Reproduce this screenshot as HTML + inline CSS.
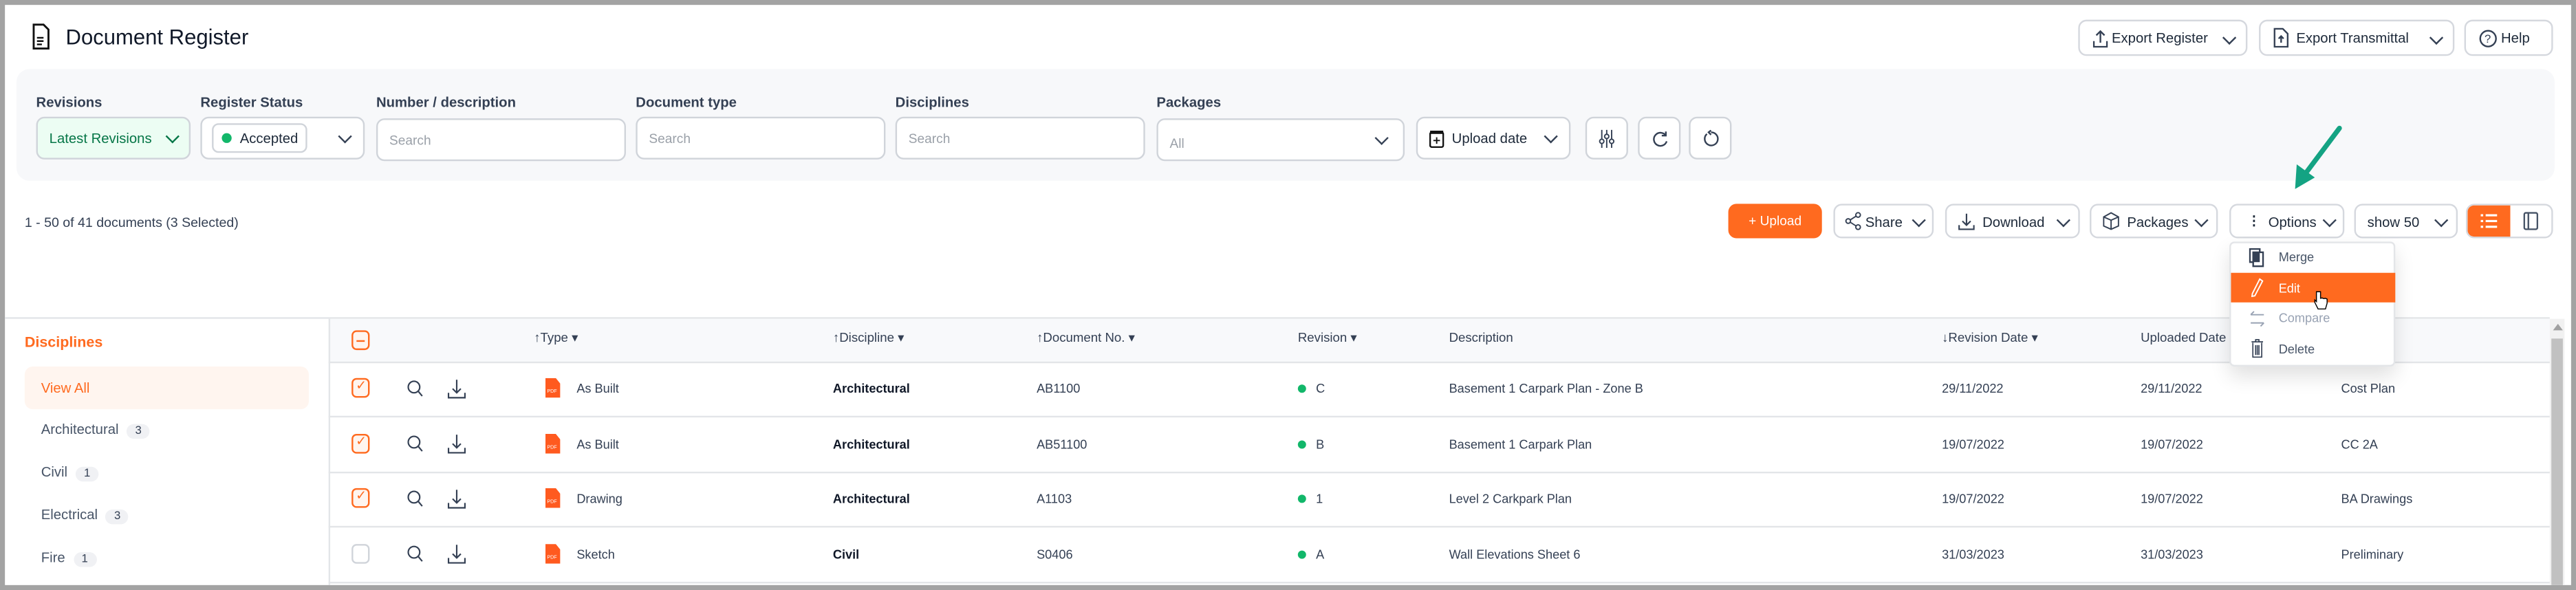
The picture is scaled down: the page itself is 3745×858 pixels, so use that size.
<!DOCTYPE html>
<html><head><meta charset="utf-8"><style>
html,body{margin:0;padding:0;width:3745px;height:858px;overflow:hidden;background:#a3a3a3}
#s{position:absolute;left:0;top:0;width:1568px;height:359px;transform-origin:0 0;transform:scale(2.3884,2.39);font-family:"Liberation Sans",sans-serif;color:#1d2939}
.a{position:absolute}
#in{left:3px;top:3px;width:1562px;height:353px;background:#fff}
.btn{position:absolute;background:#fff;border:1px solid #d5d8de;border-radius:5px;box-sizing:border-box;font-size:8.5px;display:flex;align-items:center;color:#1d2939}
.lbl{position:absolute;font-size:8.5px;color:#344054;font-weight:bold;top:57px}
.inp{position:absolute;top:71px;height:26px;background:#fff;border:1px solid #d0d4da;border-radius:5px;box-sizing:border-box;font-size:8px;color:#9aa0a8;display:flex;align-items:center;padding-left:7px}
.chev{position:absolute;width:5px;height:5px;border-right:0.8px solid #344054;border-bottom:0.8px solid #344054;transform:rotate(45deg)}
.t{position:absolute;font-size:7.6px;color:#344054;white-space:nowrap}
.th{position:absolute;font-size:7.8px;color:#344054;top:201px;white-space:nowrap}
.hl{position:absolute;left:200px;width:1352px;height:1px;background:#e3e5e8}
.cb{position:absolute;left:214px;width:11px;height:12px;border:1px solid #ff6a1f;border-radius:3px;box-sizing:border-box;background:#fff5ef}
.pdf{position:absolute;left:332px;width:9px;height:12px;background:#ff5a1f;clip-path:polygon(0 0,70% 0,100% 28%,100% 100%,0 100%)}
.pdf:after{content:"PDF";position:absolute;left:1px;top:6px;font-size:3px;color:#fff}
.dot{position:absolute;left:790px;width:5px;height:5px;border-radius:50%;background:#12b76a}
.badge{display:inline-block;background:#f0f1f4;border-radius:8px;font-size:7px;padding:1px 5px;margin-left:5px;color:#344054}
.side{position:absolute;left:25px;font-size:8.5px;color:#475467}
</style></head><body><div id="s">
<div class="a" id="in"></div>
<svg class="a" style="left:19px;top:14px" width="12" height="17" viewBox="0 0 12 17"><path d="M1.5 1h6l3 3v11.5h-9z" fill="none" stroke="#111" stroke-width="1.2"/><path d="M3.5 9h4M3.5 11h4M3.5 13h3" stroke="#111" stroke-width="1"/></svg>
<div class="a" style="left:40px;top:15px;font-size:13px;color:#101828">Document Register</div>
<div class="btn" style="left:1265px;top:12px;width:103px;height:22px;padding-left:8px"><svg width="9" height="11" viewBox="0 0 9 11"><path d="M4.5 8V1M2 3.5 4.5 1 7 3.5M.5 7v3.5h8V7" fill="none" stroke="#344054"/></svg>&nbsp;Export Register<span class="chev" style="left:88px;top:7px"></span></div>
<div class="btn" style="left:1375px;top:12px;width:119px;height:22px;padding-left:8px"><svg width="9" height="12" viewBox="0 0 9 12"><path d="M.5.5h5l3 3v8h-8z M4.5 9V5M3 6.5 4.5 5 6 6.5" fill="none" stroke="#344054"/></svg>&nbsp;&nbsp;Export Transmittal<span class="chev" style="left:104px;top:7px"></span></div>
<div class="btn" style="left:1500px;top:12px;width:54px;height:22px;padding-left:8px"><svg width="11" height="11" viewBox="0 0 11 11"><circle cx="5.5" cy="5.5" r="4.8" fill="none" stroke="#344054"/><text x="3.3" y="8" font-size="7" fill="#344054" font-family="Liberation Sans">?</text></svg>&nbsp;Help</div>
<div class="a" style="left:10px;top:42px;width:1545px;height:68px;background:#f7f8fa;border-radius:8px"></div>
<div class="lbl" style="left:22px">Revisions</div>
<div class="lbl" style="left:122px">Register Status</div>
<div class="lbl" style="left:229px">Number / description</div>
<div class="lbl" style="left:387px">Document type</div>
<div class="lbl" style="left:545px">Disciplines</div>
<div class="lbl" style="left:704px">Packages</div>
<div class="inp" style="left:22px;width:94px;background:#ecfdf3;color:#067647;font-size:8.5px">Latest Revisions<span class="chev" style="left:79px;top:8px;border-color:#067647"></span></div>
<div class="inp" style="left:122px;width:100px;padding-left:6px"><div style="border:1px solid #d0d4da;border-radius:4px;height:18px;width:58px;box-sizing:border-box;display:flex;align-items:center;color:#1d2939;font-size:8.5px;padding-left:5px"><span style="width:6px;height:6px;border-radius:50%;background:#12b76a;display:inline-block;margin-right:5px"></span>Accepted</div><span class="chev" style="left:84px;top:8px"></span></div>
<div class="inp" style="left:229px;width:152px;top:72px">Search</div>
<div class="inp" style="left:387px;width:152px">Search</div>
<div class="inp" style="left:545px;width:152px">Search</div>
<div class="inp" style="left:704px;width:151px;top:72px;height:26px;padding-top:4px">All<span class="chev" style="left:133px;top:8px"></span></div>
<div class="inp" style="left:862px;width:94px;color:#1d2939;font-size:8.5px"><svg width="9" height="11" viewBox="0 0 9 11"><rect x=".5" y="1.5" width="8" height="9" rx="1" fill="none" stroke="#111"/><rect x=".5" y=".5" width="8" height="2" fill="#111"/><path d="M4.5 4.5v4M2.5 6.5h4" stroke="#111" stroke-width=".8"/></svg>&nbsp;&nbsp;Upload date<span class="chev" style="left:78px;top:8px"></span></div>
<div class="inp" style="left:965px;width:26px;padding:0;justify-content:center"><svg width="10" height="11" viewBox="0 0 10 11"><path d="M2 0v11M5 0v11M8 0v11" stroke="#344054" stroke-width=".8"/><circle cx="2" cy="7" r="1.3" fill="#fff" stroke="#344054" stroke-width=".8"/><circle cx="5" cy="4" r="1.3" fill="#fff" stroke="#344054" stroke-width=".8"/><circle cx="8" cy="7" r="1.3" fill="#fff" stroke="#344054" stroke-width=".8"/></svg></div>
<div class="inp" style="left:997px;width:26px;padding:0;justify-content:center"><svg width="11" height="11" viewBox="0 0 11 11"><path d="M9 3.5A4 4 0 1 0 9.5 7M9 1v2.5H6.5" fill="none" stroke="#344054"/></svg></div>
<div class="inp" style="left:1028px;width:26px;padding:0;justify-content:center"><svg width="11" height="11" viewBox="0 0 11 11"><path d="M3 2.5A4 4 0 1 0 5.5 1.5M5.5.3 4 1.5 5.5 3" fill="none" stroke="#344054"/></svg></div>
<div class="a" style="left:15px;top:131px;font-size:8.2px;color:#344054">1 - 50 of 41 documents (3 Selected)</div>
<div class="btn" style="left:1052px;top:124px;width:57px;height:21px;background:#ff6a1f;border-color:#ff6a1f;color:#fff;justify-content:center;font-size:8px">+ Upload</div>
<div class="btn" style="left:1116px;top:124px;width:61px;height:21px;padding-left:6px"><svg width="10" height="11" viewBox="0 0 10 11"><circle cx="8" cy="1.8" r="1.4" fill="none" stroke="#344054" stroke-width=".8"/><circle cx="2" cy="5.5" r="1.4" fill="none" stroke="#344054" stroke-width=".8"/><circle cx="8" cy="9.2" r="1.4" fill="none" stroke="#344054" stroke-width=".8"/><path d="M3.2 4.8 6.8 2.5M3.2 6.2 6.8 8.5" stroke="#344054" stroke-width=".8"/></svg>&nbsp;Share<span class="chev" style="left:48px;top:6px"></span></div>
<div class="btn" style="left:1184px;top:124px;width:82px;height:21px;padding-left:7px"><svg width="10" height="11" viewBox="0 0 10 11"><path d="M5 1v7M2.5 5.5 5 8l2.5-2.5M.5 8v2.5h9V8" fill="none" stroke="#344054" stroke-width=".9"/></svg>&nbsp;&nbsp;Download<span class="chev" style="left:68px;top:6px"></span></div>
<div class="btn" style="left:1272px;top:124px;width:78px;height:21px;padding-left:7px"><svg width="10" height="11" viewBox="0 0 10 11"><path d="M5 .5 9.5 3v5.5L5 10.5.5 8.5V3zM.5 3 5 5l4.5-2M5 5v5.5" fill="none" stroke="#344054" stroke-width=".8"/></svg>&nbsp;&nbsp;Packages<span class="chev" style="left:64px;top:6px"></span></div>
<div class="btn" style="left:1357px;top:124px;width:70px;height:21px;padding-left:10px;font-size:8.5px"><span style="font-weight:bold;line-height:4px;font-size:8px">⋮</span>&nbsp;&nbsp;Options<span class="chev" style="left:57px;top:6px"></span></div>
<div class="btn" style="left:1433px;top:124px;width:63px;height:21px;padding-left:7px">show 50<span class="chev" style="left:49px;top:6px"></span></div>
<div class="btn" style="left:1501px;top:124px;width:53px;height:21px;overflow:hidden"><div style="width:26px;height:21px;background:#ff6a1f;display:flex;align-items:center;justify-content:center"><svg width="10" height="9" viewBox="0 0 10 9"><path d="M0 1h1.5M3 1h7M0 4.5h1.5M3 4.5h7M0 8h1.5M3 8h7" stroke="#fff" stroke-width="1.3"/></svg></div><div style="width:26px;display:flex;justify-content:center"><svg width="9" height="11" viewBox="0 0 9 11"><rect x=".5" y=".5" width="8" height="10" rx="1" fill="none" stroke="#475467"/><path d="M3 .5v10" stroke="#475467"/></svg></div></div>
<svg class="a" style="left:1385px;top:72px" width="50" height="50" viewBox="0 0 50 50"><path d="M39 6 18 34" stroke="#14a383" stroke-width="3" stroke-linecap="round"/><path d="M12 43 13 28 24 36z" fill="#14a383"/></svg>
<div class="a" style="left:3px;top:193px;width:1549px;height:1px;background:#e3e5e8"></div>
<div class="a" style="left:200px;top:194px;width:1352px;height:26px;background:#f8f9fb"></div>
<div class="a" style="left:200px;top:194px;width:1px;height:162px;background:#e3e5e8"></div>
<div class="hl" style="top:220px"></div><div class="hl" style="top:253px"></div><div class="hl" style="top:287px"></div><div class="hl" style="top:320px"></div><div class="hl" style="top:354px"></div>
<div class="a" style="left:1552px;top:194px;width:9px;height:162px;background:#f1f1f1"></div>
<div class="a" style="left:1553px;top:206px;width:7px;height:150px;background:#c1c1c1"></div>
<div class="a" style="left:1554px;top:197px;width:0;height:0;border-left:3px solid transparent;border-right:3px solid transparent;border-bottom:4px solid #a0a0a0"></div>
<div class="a" style="left:15px;top:203px;font-size:9px;color:#ff6a1f;font-weight:bold">Disciplines</div>
<div class="a" style="left:15px;top:223px;width:173px;height:26px;background:#fff5ef;border-radius:5px"></div>
<div class="side" style="left:25px;top:231px;color:#ff6a1f;font-size:8.5px">View All</div>
<div class="side" style="top:256px">Architectural<span class="badge">3</span></div>
<div class="side" style="top:282px">Civil<span class="badge">1</span></div>
<div class="side" style="top:308px">Electrical<span class="badge">3</span></div>
<div class="side" style="top:334px">Fire<span class="badge">1</span></div>
<div class="cb" style="top:201px"><div style="position:absolute;left:2px;top:4.5px;width:5px;height:1.3px;background:#ff6a1f"></div></div>
<div class="th" style="left:325px">↑Type ▾</div>
<div class="th" style="left:507px">↑Discipline ▾</div>
<div class="th" style="left:631px">↑Document No. ▾</div>
<div class="th" style="left:790px">Revision ▾</div>
<div class="th" style="left:882px">Description</div>
<div class="th" style="left:1182px">↓Revision Date ▾</div>
<div class="th" style="left:1303px">Uploaded Date</div>
<div class="cb" style="top:230px"><span style="position:absolute;left:1.5px;top:-1px;font-size:8px;color:#ff6a1f">✓</span></div>
<div class="cb" style="top:264px"><span style="position:absolute;left:1.5px;top:-1px;font-size:8px;color:#ff6a1f">✓</span></div>
<div class="cb" style="top:297px"><span style="position:absolute;left:1.5px;top:-1px;font-size:8px;color:#ff6a1f">✓</span></div>
<div class="cb" style="top:331px;border-color:#d0d4da;background:#fff"></div>
<svg class="a" style="left:247px;top:231px" width="40" height="118" viewBox="0 0 40 118">
<g fill="none" stroke="#344054" stroke-width=".9">
<g id="ic"><circle cx="5" cy="4.5" r="3.5"/><path d="M7.5 7 10 10"/><path d="M31 0v8M28.5 5.5 31 8l2.5-2.5M26 8v3h10V8"/></g>
<use href="#ic" y="33.5"/><use href="#ic" y="67"/><use href="#ic" y="100.5"/></g></svg>
<div class="pdf" style="top:230px"></div><div class="pdf" style="top:264px"></div><div class="pdf" style="top:297px"></div><div class="pdf" style="top:331px"></div>
<div class="t" style="left:351px;top:232px">As Built</div><div class="t" style="left:351px;top:266px">As Built</div><div class="t" style="left:351px;top:299px">Drawing</div><div class="t" style="left:351px;top:333px">Sketch</div>
<div class="t" style="left:507px;top:232px;font-weight:bold;color:#101828">Architectural</div><div class="t" style="left:507px;top:266px;font-weight:bold;color:#101828">Architectural</div><div class="t" style="left:507px;top:299px;font-weight:bold;color:#101828">Architectural</div><div class="t" style="left:507px;top:333px;font-weight:bold;color:#101828">Civil</div>
<div class="t" style="left:631px;top:232px">AB1100</div><div class="t" style="left:631px;top:266px">AB51100</div><div class="t" style="left:631px;top:299px">A1103</div><div class="t" style="left:631px;top:333px">S0406</div>
<div class="dot" style="top:234px"></div><div class="dot" style="top:268px"></div><div class="dot" style="top:301px"></div><div class="dot" style="top:335px"></div>
<div class="t" style="left:801px;top:232px">C</div><div class="t" style="left:801px;top:266px">B</div><div class="t" style="left:801px;top:299px">1</div><div class="t" style="left:801px;top:333px">A</div>
<div class="t" style="left:882px;top:232px">Basement 1 Carpark Plan - Zone B</div><div class="t" style="left:882px;top:266px">Basement 1 Carpark Plan</div><div class="t" style="left:882px;top:299px">Level 2 Carkpark Plan</div><div class="t" style="left:882px;top:333px">Wall Elevations Sheet 6</div>
<div class="t" style="left:1182px;top:232px">29/11/2022</div><div class="t" style="left:1182px;top:266px">19/07/2022</div><div class="t" style="left:1182px;top:299px">19/07/2022</div><div class="t" style="left:1182px;top:333px">31/03/2023</div>
<div class="t" style="left:1303px;top:232px">29/11/2022</div><div class="t" style="left:1303px;top:266px">19/07/2022</div><div class="t" style="left:1303px;top:299px">19/07/2022</div><div class="t" style="left:1303px;top:333px">31/03/2023</div>
<div class="t" style="left:1425px;top:232px">Cost Plan</div><div class="t" style="left:1425px;top:266px">CC 2A</div><div class="t" style="left:1425px;top:299px">BA Drawings</div><div class="t" style="left:1425px;top:333px">Preliminary</div>
<div class="a" style="left:1357px;top:147px;width:101px;height:76px;background:#fff;border:1px solid #e3e5e8;border-radius:3px;box-shadow:0 6px 12px rgba(0,0,0,.12);box-sizing:border-box"></div>
<svg class="a" style="left:1369px;top:151px" width="10" height="12" viewBox="0 0 10 12"><rect x=".5" y=".5" width="6" height="8" fill="none" stroke="#344054"/><rect x="2.5" y="2.5" width="6" height="8.5" fill="#fff" stroke="#344054"/><rect x="2.5" y="2.5" width="4" height="6" fill="#344054"/></svg>
<div class="t" style="left:1387px;top:152px;color:#475467">Merge</div>
<div class="a" style="left:1358px;top:166px;width:100px;height:18px;background:#ff6a1f"></div>
<svg class="a" style="left:1370px;top:169px" width="8" height="12" viewBox="0 0 8 12"><path d="M5.5.8 7.2 2 2.5 11 .8 11.3 1 9.7z" fill="none" stroke="#fff" stroke-width=".8"/></svg>
<div class="t" style="left:1387px;top:171px;color:#fff">Edit</div>
<svg class="a" style="left:1408px;top:176px" width="9" height="13" viewBox="0 0 9 13"><path d="M2 1.5v6L1 6.5 1 8l2 4h4.5l1-3.5V6l-1-.5-1 .2-1-.4-1 .2V1.5z" fill="#fff" stroke="#000" stroke-width=".6"/></svg>
<svg class="a" style="left:1369px;top:188px" width="10" height="12" viewBox="0 0 10 12"><path d="M1 3.5h8M1 3.5 3 1.5M9 8.5H1M9 8.5 7 10.5" fill="none" stroke="#98a2b3" stroke-width=".8"/></svg>
<div class="t" style="left:1387px;top:189px;color:#98a2b3">Compare</div>
<svg class="a" style="left:1370px;top:206px" width="8" height="12" viewBox="0 0 8 12"><path d="M.5 2h7M3 2V.7h2V2M1.3 2.5v8.8h5.4V2.5M3 4v6M4 4v6M5 4v6" fill="none" stroke="#344054" stroke-width=".7"/></svg>
<div class="t" style="left:1387px;top:208px;color:#475467">Delete</div>
</div></body></html>
